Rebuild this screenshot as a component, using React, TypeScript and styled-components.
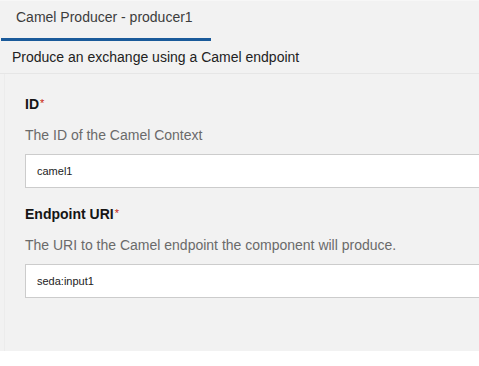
import { createGlobalStyle, styled } from "styled-components";

const GlobalStyle = createGlobalStyle`
  html, body {
    margin: 0;
    padding: 0;
    background: #ffffff;
    font-family: "Liberation Sans", Arial, sans-serif;
  }
`;

const Page = styled.main`
  width: 100%;
  height: 351px;
  background-color: #f2f2f2;
  overflow: hidden;
  border-top: 1px solid #f7f7f7;
  box-sizing: border-box;
`;

const TabBar = styled.nav`
  display: flex;
  height: 40px;
  padding-left: 1px;
`;

const Tab = styled.div<{ $active?: boolean }>`
  width: 210px;
  box-sizing: border-box;
  padding: 8px 0 0 15px;
  font-size: 14px;
  line-height: 17px;
  color: #3c3c3c;
  border-bottom: 3px solid ${(p) => (p.$active ? "#1a5a9a" : "transparent")};
`;

const Subtitle = styled.p`
  margin: 0;
  height: 33px;
  padding: 7px 12px 0;
  box-sizing: border-box;
  font-size: 14px;
  line-height: 18px;
  color: #222222;
  border-bottom: 1px solid #e6e6e6;
`;

const Form = styled.section`
  margin-left: 4px;
  border-left: 1px solid #ececec;
  padding: 19px 0 54px 20px;
  display: flex;
  flex-direction: column;
  gap: 15px;
`;

const Field = styled.div`
  display: flex;
  flex-direction: column;
`;

const Label = styled.label`
  font-size: 14px;
  line-height: 20px;
  font-weight: 700;
  color: #151515;
`;

const Required = styled.span`
  color: #c9190b;
  margin-left: 1px;
  font-weight: 400;
  vertical-align: 2px;
  font-size: 11px;
`;

const Help = styled.p`
  margin: 11px 0 9px;
  font-size: 14px;
  line-height: 20px;
  color: #6a6a6a;
`;

const Input = styled.input`
  width: 480px;
  height: 34px;
  box-sizing: border-box;
  border: 1px solid #cccccc;
  background: #ffffff;
  padding: 0 11px;
  font-family: "Liberation Sans", Arial, sans-serif;
  font-size: 11px;
  color: #222222;
  outline: none;
`;

const fields = [
  { label: "ID", help: "The ID of the Camel Context", value: "camel1" },
  {
    label: "Endpoint URI",
    help: "The URI to the Camel endpoint the component will produce.",
    value: "seda:input1",
  },
];

export default function App() {
  return (
    <>
      <GlobalStyle />
      <Page>
        <TabBar>
          <Tab $active>Camel Producer - producer1</Tab>
        </TabBar>
        <Subtitle>Produce an exchange using a Camel endpoint</Subtitle>
        <Form>
          {fields.map((f) => (
            <Field key={f.label}>
              <Label>
                {f.label}
                <Required>*</Required>
              </Label>
              <Help>{f.help}</Help>
              <Input defaultValue={f.value} readOnly />
            </Field>
          ))}
        </Form>
      </Page>
    </>
  );
}
